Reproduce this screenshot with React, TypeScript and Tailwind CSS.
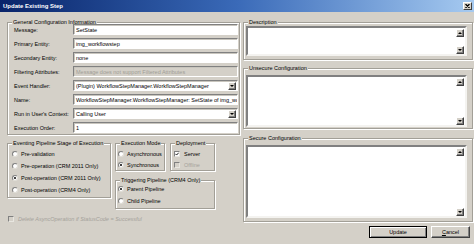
import type { ReactNode } from "react";

const Group = ({
  title,
  className = "",
  children,
}: {
  title: string;
  className?: string;
  children: ReactNode;
}) => (
  <fieldset
    className={`min-w-0 border border-[#a29f97] shadow-[1px_1px_0_#fff,inset_1px_1px_0_#fff] ${className}`}
  >
    <legend className="ml-[4px] px-[1px] leading-[8px] bg-[#d4d0c8]">{title}</legend>
    {children}
  </fieldset>
);

const Arrow = ({ up = false }: { up?: boolean }) => (
  <span className="w-[8px] h-[8px] flex items-center justify-center bg-[#d4d0c8] border border-t-white border-l-white border-b-[#404040] border-r-[#404040] shadow-[inset_-1px_-1px_0_#808080]">
    <svg width="4" height="2" viewBox="0 0 4 2">
      {up ? <path d="M0 2 L2 0 L4 2 Z" fill="#000" /> : <path d="M0 0 L4 0 L2 2 Z" fill="#000" />}
    </svg>
  </span>
);

const Input = ({
  value,
  disabled = false,
  combo = false,
}: {
  value: string;
  disabled?: boolean;
  combo?: boolean;
}) => (
  <div
    className={`flex-1 h-[11px] flex items-center min-w-0 border border-t-[#808080] border-l-[#808080] border-b-white border-r-white shadow-[inset_1px_1px_0_#c8c5bd] ${
      disabled ? "bg-[#d4d0c8] text-[#a09d96]" : "bg-white"
    }`}
  >
    <span className="flex-1 min-w-0 pl-[2px] whitespace-nowrap overflow-hidden">{value}</span>
    {combo && (
      <span className="mr-[1px]">
        <Arrow />
      </span>
    )}
  </div>
);

const Row = ({ label, children }: { label: string; children: ReactNode }) => (
  <div className="flex items-center h-[11px]">
    <span className="w-[59px] shrink-0">{label}</span>
    {children}
  </div>
);

const Radio = ({ label, checked = false, h = "h-[12px]" }: { label: string; checked?: boolean; h?: string }) => (
  <div className={`flex items-center ${h}`}>
    <span className="w-[6px] h-[6px] rounded-full bg-white border border-t-[#808080] border-l-[#808080] border-b-[#e0ddd6] border-r-[#e0ddd6] flex items-center justify-center">
      {checked && <span className="w-[2px] h-[2px] rounded-full bg-black" />}
    </span>
    <span className="ml-[3px]">{label}</span>
  </div>
);

const Check = ({
  label,
  checked = false,
  disabled = false,
  className = "",
}: {
  label: string;
  checked?: boolean;
  disabled?: boolean;
  className?: string;
}) => (
  <div className={`flex items-center h-[11px] ${className}`}>
    <span
      className={`w-[6px] h-[6px] flex items-center justify-center border border-t-[#808080] border-l-[#808080] border-b-[#e8e6e0] border-r-[#e8e6e0] ${
        disabled ? "bg-[#d4d0c8]" : "bg-white"
      }`}
    >
      {checked && (
        <svg width="5" height="4" viewBox="0 0 5 4">
          <path d="M0.5 1.8 L2 3.3 L4.6 0.4" stroke="#000" strokeWidth="1.1" fill="none" />
        </svg>
      )}
    </span>
    <span className={`ml-[4px] ${disabled ? "text-[#a5a29b]" : ""}`}>{label}</span>
  </div>
);

const TextBox = ({ h }: { h: string }) => (
  <div
    className={`${h} ml-[2px] mr-[5px] flex bg-white border-2 border-t-[#808080] border-l-[#808080] border-b-[#f4f3f0] border-r-[#f4f3f0]`}
  >
    <div className="flex-1" />
    <div className="w-[9px] flex flex-col justify-between items-start pt-[1px]">
      <Arrow up />
      <Arrow />
    </div>
  </div>
);

const Button = ({ children, primary = false, w }: { children: ReactNode; primary?: boolean; w: string }) => (
  <button
    className={`${w} h-[12px] flex items-center justify-center bg-[#d4d0c8] text-black leading-[8px] ${
      primary
        ? "border border-black shadow-[inset_1px_1px_0_#fff,inset_-1px_-1px_0_#808080]"
        : "border border-t-white border-l-white border-b-[#404040] border-r-[#404040] shadow-[inset_-1px_-1px_0_#808080]"
    }`}
  >
    {children}
  </button>
);

export default function App() {
  return (
    <div className="w-[474px] h-[244px] bg-[#d4d0c8] flex flex-col overflow-hidden font-['Liberation_Sans',Arial,sans-serif] text-[5.5px] leading-[8px] text-black">
      <div className="h-[12px] shrink-0 flex items-center justify-between pl-[3px] pr-[2px] bg-linear-to-r from-[#0a246a] via-[#3a6ab8] to-[#a6caf0]">
        <span className="font-bold text-white text-[6px]">Update Existing Step</span>
        <span className="w-[9px] h-[8px] flex items-center justify-center bg-[#d4d0c8] border border-t-white border-l-white border-b-[#404040] border-r-[#404040]">
          <svg width="5" height="4" viewBox="0 0 5 4">
            <path d="M0.5 0 L4.5 4 M4.5 0 L0.5 4" stroke="#000" strokeWidth="1.2" />
          </svg>
        </span>
      </div>

      <div className="flex flex-1 pt-[6px] pl-[7px] gap-[3px]">
        <div className="w-[233px] shrink-0 flex flex-col">
          <Group title="General Configuration Information">
            <div className="-mt-[2px] pl-[6px] pr-[1px] pb-[1px] flex flex-col gap-[3px]">
              <Row label="Message:">
                <Input value="SetState" />
              </Row>
              <Row label="Primary Entity:">
                <Input value="img_workflowstep" />
              </Row>
              <Row label="Secondary Entity:">
                <Input value="none" />
              </Row>
              <Row label="Filtering Attributes:">
                <Input value="Message does not support Filtered Attributes" disabled />
              </Row>
              <Row label="Event Handler:">
                <Input value="(Plugin) WorkflowStepManager.WorkflowStepManager" combo />
              </Row>
              <Row label="Name:">
                <Input value="WorkflowStepManager.WorkflowStepManager: SetState of img_workflowstep" />
              </Row>
              <Row label="Run in User's Context:">
                <Input value="Calling User" combo />
              </Row>
              <Row label="Execution Order:">
                <Input value="1" />
              </Row>
            </div>
          </Group>

          <div className="mt-[4px] flex gap-[4px] items-start">
            <Group title="Eventing Pipeline Stage of Execution" className="w-[104px]">
              <div className="pl-[4px] pt-[1px] pb-[1px]">
                <Radio label="Pre-validation" />
                <Radio label="Pre-operation (CRM 2011 Only)" />
                <Radio label="Post-operation (CRM 2011 Only)" checked />
                <Radio label="Post-operation (CRM4 Only)" />
              </div>
            </Group>

            <div className="w-[100px] flex flex-col">
              <div className="flex gap-[5px]">
                <Group title="Execution Mode" className="w-[50px]">
                  <div className="pl-[2px] pt-[1px]">
                    <Radio label="Asynchronous" h="h-[11px]" />
                    <Radio label="Synchronous" checked h="h-[11px]" />
                  </div>
                </Group>
                <Group title="Deployment" className="w-[45px]">
                  <div className="pl-[3px] pt-[1px]">
                    <Check label="Server" checked />
                    <Check label="Offline" disabled />
                  </div>
                </Group>
              </div>
              <Group title="Triggering Pipeline (CRM4 Only)" className="mt-[5px]">
                <div className="pl-[2px] -mt-[1px] pb-[1px]">
                  <Radio label="Parent Pipeline" checked />
                  <Radio label="Child Pipeline" />
                </div>
              </Group>
            </div>
          </div>

          <Check
            label="Delete AsyncOperation if StatusCode = Successful"
            disabled
            className="mt-[4px] pl-[1px] italic"
          />
        </div>

        <div className="w-[230px] shrink-0 flex flex-col">
          <Group title="Description">
            <div className="pb-[3px]">
              <TextBox h="h-[30px]" />
            </div>
          </Group>
          <Group title="Unsecure Configuration" className="mt-[4px]">
            <div className="pt-[3px] pb-[1px]">
              <TextBox h="h-[52px]" />
            </div>
          </Group>
          <Group title="Secure Configuration" className="mt-[5px]">
            <div className="pt-[3px] pb-[3px]">
              <TextBox h="h-[73px]" />
            </div>
          </Group>
          <div className="mt-[4px] flex justify-end gap-[4px] pr-[3px]">
            <Button primary w="w-[58px]">
              Update
            </Button>
            <Button w="w-[39px]">
              <span>
                <span className="underline">C</span>ancel
              </span>
            </Button>
          </div>
        </div>
      </div>
    </div>
  );
}
